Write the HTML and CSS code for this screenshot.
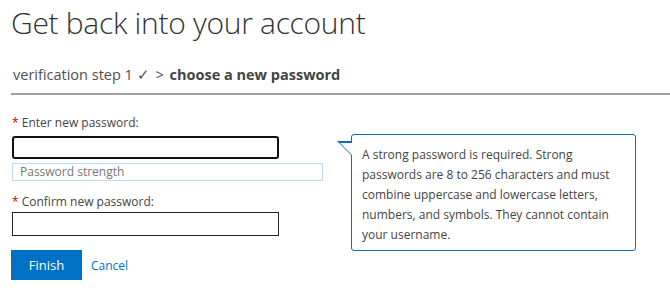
FILE: index.html
```html
<!DOCTYPE html>
<html lang="en">
<head>
<meta charset="utf-8">
<title>Get back into your account</title>
<link rel="stylesheet" href="styles.css">
</head>
<body>
<div class="page">
  <h1 class="title">Get back into your account</h1>
  <div class="crumbs">
    <span class="step">verification step 1 ✓</span>
    <span class="sep">&gt;</span>
    <span class="current">choose a new password</span>
  </div>
  <div class="form-area">
    <div class="fields">
      <label class="label"><span class="req">*</span> Enter new password:</label>
      <div class="input focused"></div>
      <div class="strength">Password strength</div>
      <label class="label second"><span class="req">*</span> Confirm new password:</label>
      <div class="input plain"></div>
      <div class="actions">
        <button class="finish">Finish</button>
        <a class="cancel" href="#">Cancel</a>
      </div>
    </div>
    <div class="tip">A strong password is required. Strong<br>passwords are 8 to 256 characters and&nbsp;must<br>combine uppercase and lowercase letters,<br>numbers, and symbols. They cannot contain<br>your username.</div>
  </div>
</div>
</body>
</html>
```
FILE: styles.css
```css
html, body {
  margin: 0;
  padding: 0;
  background: #fff;
}
body {
  font-family: "Open Sans", "Noto Sans", "Liberation Sans", sans-serif;
  color: #333;
}
.page {
  padding-left: 11px;
}
.title {
  margin: 0;
  padding-top: 3px;
  font-weight: 300;
  font-size: 30px;
  line-height: 40px;
  color: #333;
  letter-spacing: -0.3px;
}
.crumbs {
  margin-top: 20px;
  padding-left: 2px;
  font-size: 14.5px;
  line-height: 24px;
  padding-bottom: 6px;
  border-bottom: 2px solid #a0a0a0;
  color: #505050;
}
.crumbs .sep {
  margin: 0 2px;
}
.crumbs .current {
  font-weight: 700;
  color: #444;
}
.form-area {
  display: flex;
  align-items: flex-start;
  margin-top: 20px;
}
.fields {
  width: 312px;
  flex-shrink: 0;
  display: flex;
  flex-direction: column;
}
.label {
  font-size: 12px;
  line-height: 16px;
  padding-left: 1px;
  color: #444;
}
.label.second {
  margin-top: 13px;
}
.req {
  color: #c00;
}
.input {
  box-sizing: border-box;
  width: 267px;
  margin-left: 1px;
}
.input.focused {
  height: 23px;
  margin-top: 5px;
  border: 2px solid #111;
  border-radius: 3px;
}
.input.plain {
  height: 24px;
  margin-top: 2px;
  border: 1px solid #222;
}
.strength {
  box-sizing: border-box;
  width: 311px;
  height: 18px;
  margin-top: 4px;
  margin-left: 1px;
  border: 1px solid #bcdcf2;
  padding-left: 7px;
  font-size: 12px;
  line-height: 16px;
  color: #777;
}
.actions {
  display: flex;
  align-items: center;
  margin-top: 14px;
}
.finish {
  width: 71px;
  height: 30px;
  border: none;
  background: #0072c6;
  color: #fff;
  font-family: inherit;
  font-size: 13px;
  padding: 0;
}
.cancel {
  margin-left: 9px;
  font-size: 12px;
  color: #0072c6;
  text-decoration: none;
}
.tip {
  position: relative;
  flex-shrink: 0;
  box-sizing: border-box;
  width: 285px;
  margin-left: 28px;
  margin-top: 19px;
  padding: 10px 2px 5px 10px;
  border: 1.5px solid #0f6cbd;
  border-radius: 3px;
  font-size: 12px;
  line-height: 20px;
  color: #444;
  white-space: nowrap;
}
.tip::before {
  content: "";
  position: absolute;
  left: -15px;
  top: 6px;
  width: 0;
  height: 0;
  border-top: 15px solid #0f6cbd;
  border-left: 15px solid transparent;
}
.tip::after {
  content: "";
  position: absolute;
  left: -12px;
  top: 7.5px;
  width: 0;
  height: 0;
  border-top: 13px solid #fff;
  border-left: 13px solid transparent;
}
```
